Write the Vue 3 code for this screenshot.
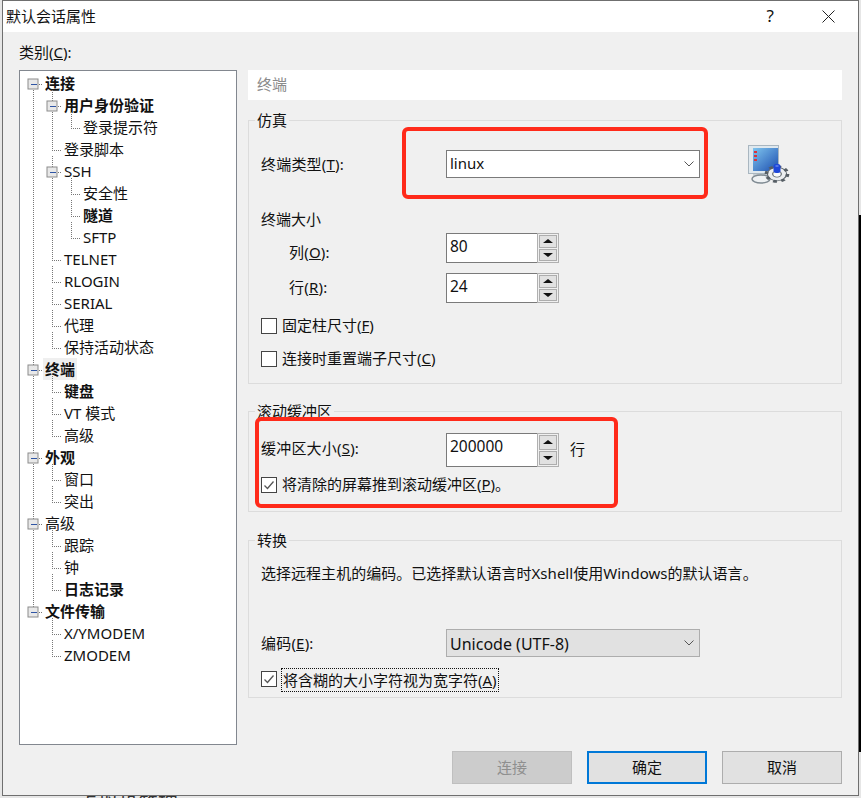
<script setup>
const nodes = [
  { t: '连接', l: 0, b: 1 }, { t: '用户身份验证', l: 1, b: 1, box: 1 }, { t: '登录提示符', l: 2 }, { t: '登录脚本', l: 1 },
  { t: 'SSH', l: 1, box: 1 }, { t: '安全性', l: 2 }, { t: '隧道', l: 2, b: 1 }, { t: 'SFTP', l: 2 },
  { t: 'TELNET', l: 1 }, { t: 'RLOGIN', l: 1 }, { t: 'SERIAL', l: 1 }, { t: '代理', l: 1 }, { t: '保持活动状态', l: 1 },
  { t: '终端', l: 0, b: 1, sel: 1 }, { t: '键盘', l: 1, b: 1 }, { t: 'VT 模式', l: 1 }, { t: '高级', l: 1 },
  { t: '外观', l: 0, b: 1 }, { t: '窗口', l: 1 }, { t: '突出', l: 1 },
  { t: '高级', l: 0 }, { t: '跟踪', l: 1 }, { t: '钟', l: 1 }, { t: '日志记录', l: 1, b: 1 },
  { t: '文件传输', l: 0, b: 1 }, { t: 'X/YMODEM', l: 1 }, { t: 'ZMODEM', l: 1 },
]
const yOf = (i) => 13 + i * 22
const xOf = (l) => 13 + l * 19
const segs = []
const boxes = []
nodes.forEach((n, i) => {
  const x = xOf(n.l), y = yOf(i)
  const hasBox = n.l === 0 || n.box
  if (hasBox) boxes.push({ x, y })
  segs.push(`M${x + (hasBox ? 6 : 0)} ${y + 0.5}H${x + 10}`)
  let last = -1
  for (let j = i - 1; j >= 0; j--) {
    if (nodes[j].l <= n.l) { last = j; break }
  }
  if (last >= 0) segs.push(`M${x + 0.5} ${yOf(last) + 6}V${y}`)
})
const linePath = segs.join('')
</script>

<template>
  <div class="page">
    <div class="edge"></div>
    <div class="dialog">
      <header class="titlebar">
        <span class="title">默认会话属性</span>
        <span class="help">?</span>
        <svg class="close" width="13" height="13" viewBox="0 0 13 13"><path d="M.5.5l12 12M12.5.5l-12 12" stroke="#222" fill="none"/></svg>
      </header>

      <div class="body">
        <aside class="side">
          <div class="side-label">类别(<u>C</u>):</div>
          <div class="tree">
            <svg class="tree-lines" width="216" height="672">
              <path :d="linePath" stroke="#777" stroke-dasharray="1 1" fill="none"/>
              <g v-for="b in boxes" :key="b.x + '-' + b.y">
                <rect :x="b.x - 5" :y="b.y - 5" width="10" height="10" fill="#e8e8e8" stroke="#8c8c8c"/>
                <path :d="`M${b.x - 2} ${b.y + 0.5}h6`" stroke="#2f55a4"/>
              </g>
            </svg>
            <div v-for="(n, i) in nodes" :key="i" class="node" :class="'l' + n.l">
              <span :class="{ bold: n.b, sel: n.sel }">{{ n.t }}</span>
            </div>
          </div>
        </aside>

        <main class="content">
          <div class="heading">终端</div>

          <fieldset class="group g1">
            <legend>仿真</legend>
            <div class="row type-row">
              <label class="lbl">终端类型(<u>T</u>):</label>
              <div class="select">
                <span class="val">linux</span>
                <svg width="10" height="6" viewBox="0 0 10 6"><path d="M.5.5L5 5 9.5.5" stroke="#555" fill="none"/></svg>
              </div>
              <svg class="term-icon" width="44" height="42" viewBox="0 0 44 42">
                <defs>
                  <linearGradient id="scr" x1="0" y1="0" x2="1" y2="1"><stop offset="0" stop-color="#7fc4ee"/><stop offset="1" stop-color="#1d4fb0"/></linearGradient>
                </defs>
                <rect x="2.5" y="2.5" width="30" height="28" fill="#dfe8ee" stroke="#a9b6c0"/>
                <rect x="7" y="5" width="25" height="23" fill="url(#scr)"/>
                <path d="M8 9h3M8 13h3M8 17h3" stroke="#d8343c" stroke-width="2"/>
                <path d="M7 31h20v3H7z" fill="#c8d0d6"/>
                <ellipse cx="15" cy="36" rx="9" ry="4" fill="#eef1f3" stroke="#7f8a92" stroke-width="1.5"/>
                <g transform="translate(31 31) scale(1.2 .85)">
                  <circle r="8" fill="#eceef0" stroke="#5f676e"/>
                  <circle r="8.8" fill="none" stroke="#565e65" stroke-width="3" stroke-dasharray="3.2 3.7"/>
                  <circle r="3.6" fill="#fafbfb" stroke="#5f676e"/>
                </g>
                <rect x="27.5" y="21" width="7" height="9" rx="2.5" fill="#1f47d8"/>
                <path d="M29.5 23h3" stroke="#8aa6f5"/>
              </svg>
            </div>
            <div class="subhead">终端大小</div>
            <div class="row size-row cols">
              <label class="lbl inset low">列(<u>O</u>):</label>
              <div class="spin"><span class="spin-val">80</span><div class="spin-btns"><i class="up"></i><i class="down"></i></div></div>
            </div>
            <div class="row size-row rows">
              <label class="lbl inset high">行(<u>R</u>):</label>
              <div class="spin"><span class="spin-val">24</span><div class="spin-btns"><i class="up"></i><i class="down"></i></div></div>
            </div>
            <div class="check fixed"><span class="cb"></span><span class="cap">固定柱尺寸(<u>F</u>)</span></div>
            <div class="check reset"><span class="cb"></span><span class="cap">连接时重置端子尺寸(<u>C</u>)</span></div>
          </fieldset>

          <fieldset class="group g2">
            <legend>滚动缓冲区</legend>
            <div class="row buf-row">
              <label class="lbl high2">缓冲区大小(<u>S</u>):</label>
              <div class="spin tall"><span class="spin-val">200000</span><div class="spin-btns"><i class="up"></i><i class="down"></i></div></div>
              <span class="unit">行</span>
            </div>
            <div class="check push">
              <span class="cb"><svg width="14" height="14" viewBox="0 0 14 14"><path d="M2.5 7.5l3 3 6-7" stroke="#555" stroke-width="1.3" fill="none"/></svg></span><span class="cap">将清除的屏幕推到滚动缓冲区(<u>P</u>)。</span>
            </div>
          </fieldset>

          <fieldset class="group g3">
            <legend>转换</legend>
            <p class="desc">选择远程主机的编码。已选择默认语言时Xshell使用Windows的默认语言。</p>
            <div class="row enc-row">
              <label class="lbl">编码(<u>E</u>):</label>
              <div class="select gray">
                <span class="val big">Unicode (UTF-8)</span>
                <svg width="10" height="6" viewBox="0 0 10 6"><path d="M.5.5L5 5 9.5.5" stroke="#555" fill="none"/></svg>
              </div>
            </div>
            <div class="check wide">
              <span class="cb"><svg width="14" height="14" viewBox="0 0 14 14"><path d="M2.5 7.5l3 3 6-7" stroke="#555" stroke-width="1.3" fill="none"/></svg></span><span class="focus">将含糊的大小字符视为宽字符(<u>A</u>)</span>
            </div>
          </fieldset>
        </main>
      </div>

      <footer class="actions">
        <button class="btn disabled">连接</button>
        <button class="btn primary">确定</button>
        <button class="btn">取消</button>
      </footer>

      <div class="mark m1"></div>
      <div class="mark m2"></div>
    </div>
    <div class="behind">虚拟机管理</div>
  </div>
</template>

<style scoped>
.page { position: relative; width: 861px; height: 798px; background: #e6e6e6; overflow: hidden; font: 15px/22px "Noto Sans", "Noto Sans CJK SC", sans-serif; color: #111; }
.edge { position: absolute; left: 859px; top: 215px; width: 2px; height: 537px; background: #000; }
.dialog { position: relative; box-sizing: border-box; width: 857px; height: 796px; margin-left: 2px; background: #f0f0f0; border: 1px solid #6f6f6f; display: flex; flex-direction: column; }
.behind { padding-left: 78px; font-size: 20px; line-height: 26px; margin-top: -4px; color: #333; }
.titlebar { height: 31px; flex: none; background: #fff; display: flex; align-items: center; padding: 0 0 2px 3px; box-sizing: border-box; }
.title { flex: 1; }
.help { margin-right: 48px; font-size: 17px; }
.close { margin-right: 23px; margin-top: 2px; }
.body { display: flex; flex: 1; min-height: 0; }
.side { width: 245px; flex: none; padding-left: 16px; box-sizing: border-box; }
.side-label { margin-top: 9px; height: 29px; line-height: 22px; }
.tree { position: relative; box-sizing: border-box; width: 218px; height: 675px; background: #fff; border: 1px solid #82878f; padding-top: 1px; }
.tree-lines { position: absolute; left: 0; top: 0; }
.node { height: 22px; line-height: 22px; white-space: nowrap; }
.node span { display: inline-block; padding: 0 2px; }
.l0 { padding-left: 23px; }
.l1 { padding-left: 42px; }
.l2 { padding-left: 61px; }
.bold { font-weight: 700; }
.sel { background: #efefef; }
.content { width: 594px; flex: none; padding-top: 38px; display: flex; flex-direction: column; }
.heading { height: 30px; flex: none; background: #fff; color: #8a8a8a; padding-left: 9px; line-height: 29px; margin-bottom: 9px; }
.group { margin: 0; padding: 0 12px; min-width: 0; box-sizing: border-box; border: 1px solid #dcdcdc; flex: none; }
.group legend { padding: 0 2px; margin-left: -6px; height: 22px; line-height: 23px; }
.g1 { height: 275px; margin-bottom: 16px; }
.g2 { height: 112px; margin-bottom: 17px; }
.g3 { height: 169px; }
.row { display: flex; align-items: center; }
.lbl { width: 185px; flex: none; letter-spacing: .2px; }
.inset { padding-left: 28px; box-sizing: border-box; }
.low { padding-top: 8px; }
.high { padding-bottom: 2px; }
.high2 { padding-bottom: 4px; }
.type-row { margin-top: 19px; height: 28px; }
.select { box-sizing: border-box; width: 254px; height: 28px; border: 1px solid #7a7a7a; background: #fff; display: flex; align-items: center; justify-content: space-between; padding: 0 5px 0 3px; }
.select.gray { background: #e1e1e1; border-color: #adadad; }
.val { line-height: 24px; padding-bottom: 2px; }
.val.big { font-size: 16px; padding-bottom: 0; padding-top: 1px; }
.term-icon { margin-left: 46px; }
.subhead { margin-top: 30px; height: 22px; }
.cols { margin-top: 3px; height: 30px; }
.rows { margin-top: 10px; height: 30px; }
.spin { box-sizing: border-box; width: 113px; height: 30px; display: flex; }
.spin-val { flex: 1; box-sizing: border-box; border: 1px solid #7a7a7a; border-right: 0; background: #fff; padding-left: 3px; line-height: 25px; font-size: 15.5px; }
.spin-btns { width: 22px; box-sizing: border-box; border: 1px solid #b0b0b0; display: flex; flex-direction: column; gap: 1px; padding: 1px; background: #f0f0f0; }
.spin-btns i { flex: 1; display: flex; align-items: center; justify-content: center; background: #e1e1e1; border: 1px solid #adadad; }
.up::before { content: ""; border: 4px solid transparent; border-top: 0; border-bottom: 4px solid #111; border-left-width: 5px; border-right-width: 5px; }
.down::before { content: ""; border: 4px solid transparent; border-bottom: 0; border-top: 4px solid #111; border-left-width: 5px; border-right-width: 5px; }
.tall { height: 34px; }
.check { display: flex; align-items: center; height: 22px; }
.cap { margin-top: -2px; }
.cb { box-sizing: border-box; width: 16px; height: 16px; margin-right: 5px; flex: none; background: #fff; border: 1px solid #444; display: flex; align-items: center; justify-content: center; }
.fixed { margin-top: 12px; }
.reset { margin-top: 11px; }
.buf-row { margin-top: 11px; height: 34px; }
.unit { margin-left: 11px; margin-top: -2px; }
.push { margin-top: 7px; }
.desc { margin: 11px 0 0; height: 22px; letter-spacing: .03px; }
.enc-row { margin-top: 45px; height: 28px; }
.wide { margin-top: 11px; }
.focus { outline: 1px dotted #111; padding: 0 1px; margin-top: 1px; }
.actions { height: 33px; flex: none; display: flex; justify-content: flex-end; gap: 15px; padding-right: 16px; padding-bottom: 11px; }
.btn { box-sizing: border-box; width: 120px; height: 33px; background: #e1e1e1; border: 1px solid #adadad; font: inherit; color: #111; padding: 0 0 2px; }
.btn.disabled { background: #ccc; border-color: #bfbfbf; color: #8f8f8f; }
.btn.primary { border: 2px solid #0078d7; }
.mark { position: absolute; box-sizing: border-box; border: 4px solid #ff2a1a; border-radius: 6px; pointer-events: none; }
.m1 { left: 399px; top: 126px; width: 306px; height: 72px; }
.m2 { left: 252px; top: 416px; width: 363px; height: 91px; }
</style>

<style>
html, body { margin: 0; }
</style>
